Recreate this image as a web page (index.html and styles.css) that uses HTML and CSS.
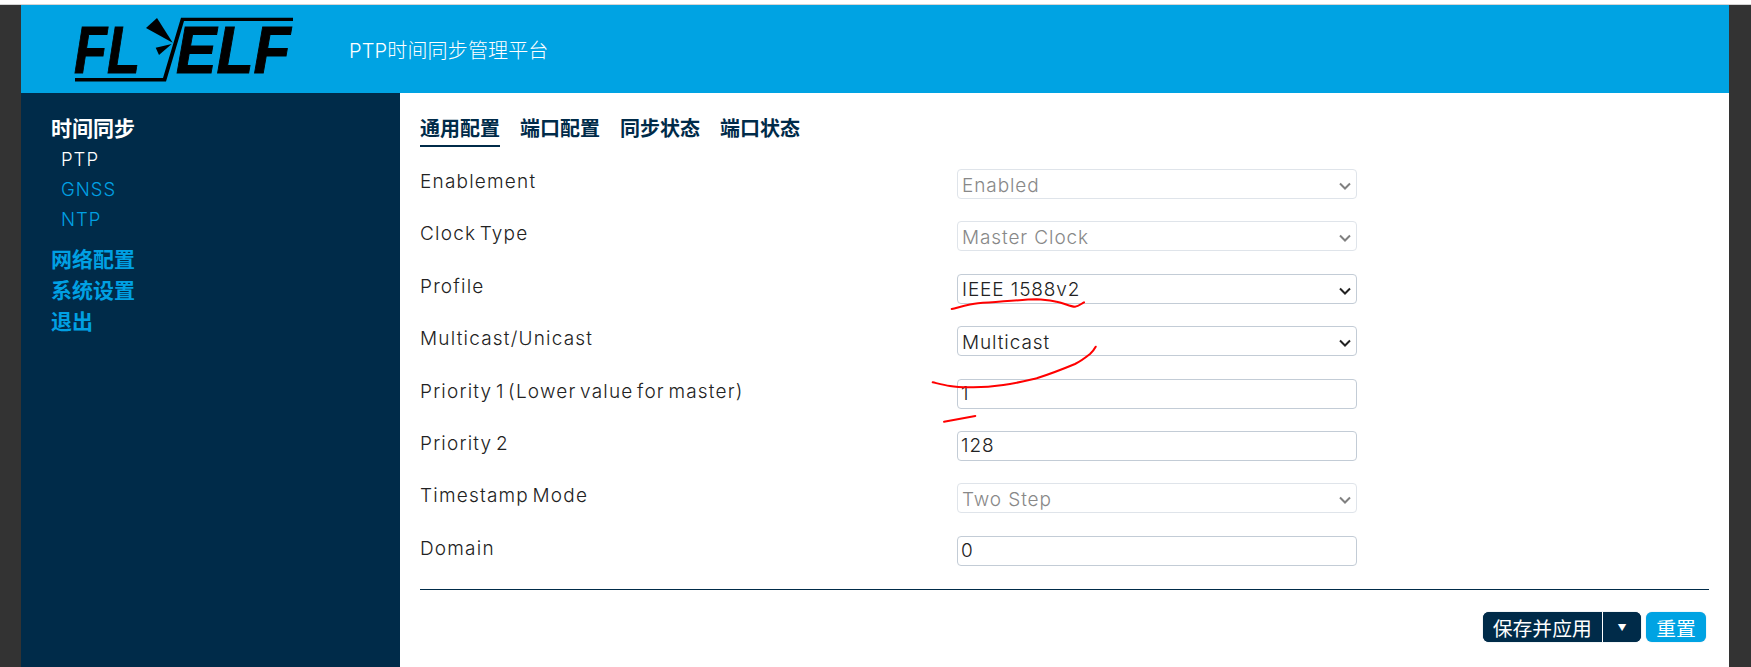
FILE: index.html
```html
<!DOCTYPE html>
<html lang="zh-CN">
<head>
<meta charset="utf-8">
<title>PTP时间同步管理平台</title>
<link rel="stylesheet" href="styles.css">
</head>
<body>
<div class="topline"></div>
<div class="frame">
  <header class="header">
    <svg class="logo" width="226" height="66" viewBox="0 0 226 66" role="img" aria-label="FLYELF">
      <path class="logo-ink" d="M4 61H92L110 .7H222V4H113L95 64.500H4Z"/>
      <path class="logo-ink" d="M75 11L86 1L101.700 25.700Z"/>
      <path class="logo-ink" d="M84.700 30.700L100.700 27L88 38Z"/>
      <text class="logo-text" transform="translate(3 56) scale(.82 1)">FL</text>
      <text class="logo-text" transform="translate(105 56) scale(.92 1)">ELF</text>
    </svg>
    <div class="title">PTP时间同步管理平台</div>
  </header>
  <div class="body">
    <nav class="sidebar">
      <a class="nav-head active">时间同步</a>
      <a class="nav-sub active">PTP</a>
      <a class="nav-sub">GNSS</a>
      <a class="nav-sub">NTP</a>
      <a class="nav-head gap">网络配置</a>
      <a class="nav-head">系统设置</a>
      <a class="nav-head">退出</a>
    </nav>
    <main class="main">
      <div class="tabs">
        <a class="tab selected">通用配置</a>
        <a class="tab">端口配置</a>
        <a class="tab">同步状态</a>
        <a class="tab">端口状态</a>
      </div>
      <form class="form">
        <div class="row"><label class="label">Enablement</label><select class="control choice" disabled><option>Enabled</option></select></div>
        <div class="row"><label class="label">Clock Type</label><select class="control choice" disabled><option>Master Clock</option></select></div>
        <div class="row"><label class="label">Profile</label><select class="control choice"><option>IEEE 1588v2</option></select></div>
        <div class="row"><label class="label">Multicast/Unicast</label><select class="control choice"><option>Multicast</option></select></div>
        <div class="row"><label class="label">Priority 1 (Lower value for master)</label><input class="control text" value="1"></div>
        <div class="row"><label class="label">Priority 2</label><input class="control text" value="128"></div>
        <div class="row"><label class="label">Timestamp Mode</label><select class="control choice" disabled><option>Two Step</option></select></div>
        <div class="row"><label class="label">Domain</label><input class="control text" value="0"></div>
      </form>
      <div class="actions">
        <div class="split">
          <button class="split-main" type="button">保存并应用</button>
          <button class="split-caret" type="button">▼</button>
        </div>
        <button class="reset" type="button">重置</button>
      </div>
    </main>
  </div>
</div>
<svg class="ink" width="1751" height="667" viewBox="0 0 1751 667" aria-hidden="true">
  <path d="M951.700 309C960 307 970 304 978 303.300C1000 302 1020 299.500 1036.700 299.300C1045 299.500 1050 300.500 1056.700 301.700C1064 303 1070 306.500 1075 306.700C1078 306.500 1081 304 1084 302.300"/>
  <path d="M1095.700 346.700C1094 350 1092 352 1090 354C1085 358 1081 361 1075 364C1063 369 1050 374 1036.700 378.300C1025 381 1015 383.500 1003.300 385C990 387 980 387.500 970 387.300C962 387.200 956 387 950 386C944 385 938 383.500 932.700 382.300"/>
  <path d="M944 421.700L975.300 416"/>
</svg>
</body>
</html>
```
FILE: styles.css
```css
* { box-sizing: border-box; }
html, body { margin: 0; height: 100%; overflow: hidden; }
body {
  background: #fff;
  color: #222;
  font-family: Inter, "Noto Sans CJK SC", sans-serif;
  font-weight: 300;
}
.topline { height: 5px; background: #fff; border-bottom: 1px solid #d4d4d4; }
.frame {
  height: 662px;
  background: #fff;
  border-left: 21px solid #333;
  border-right: 22px solid #333;
  display: flex;
  flex-direction: column;
}
.header {
  height: 88px;
  background: #00a3e3;
  display: flex;
  align-items: flex-start;
  flex: none;
}
.logo { margin: 12px 0 0 50px; flex: none; overflow: visible; }
.logo-ink { fill: #000; }
.logo-text {
  font-family: "Liberation Sans", sans-serif;
  font-weight: 700;
  font-style: italic;
  font-size: 66px;
  fill: #000;
  stroke: #000;
  stroke-width: 1;
}
.title {
  margin: 32px 0 0 52px;
  color: #fff;
  font-size: 20px;
  line-height: 28px;
  letter-spacing: .15px;
}
.body { flex: 1; display: flex; min-height: 0; }
.sidebar {
  width: 379px;
  flex: none;
  background: #002b49;
  padding: 20px 0 0 30px;
  display: flex;
  flex-direction: column;
  align-items: flex-start;
}
.nav-head {
  font-size: 21px;
  font-weight: 700;
  line-height: 31px;
  color: #00a0e3;
}
.nav-head.active { color: #fff; }
.nav-head.gap { margin-top: 10px; }
.nav-sub {
  font-size: 18.500px;
  line-height: 30px;
  margin-left: 10px;
  letter-spacing: 1px;
  color: #00a0e3;
}
.nav-sub.active { color: #fff; }
.main { flex: 1; padding: 0 20px; min-width: 0; }
.tabs { display: flex; gap: 20px; padding-top: 22px; }
.tab {
  font-size: 20px;
  font-weight: 700;
  line-height: 28px;
  height: 32px;
  color: #002b49;
}
.tab.selected { border-bottom: 2px solid #002b49; }
.form {
  margin-top: 22px;
  padding-bottom: 8px;
  border-bottom: 1px solid #002b49;
  height: 421px;
}
.row {
  display: flex;
  height: 30px;
  margin-bottom: 22.400px;
}
.label {
  width: 537px;
  flex: none;
  font-size: 19px;
  line-height: 26px;
  letter-spacing: 1.200px;
  word-spacing: -3px;
  color: #222;
}
.control {
  width: 400px;
  height: 30px;
  flex: none;
  border: 1px solid #c3ccd6;
  border-radius: 4px;
  background-color: #fff;
  color: #222;
  font: 300 19px Inter, "Noto Sans CJK SC", sans-serif;
  letter-spacing: .9px;
  outline: none;
}
.choice {
  appearance: none;
  padding: 2px 24px 0 4px;
  background-repeat: no-repeat;
  background-position: right 5px top 12px;
  background-size: 12px 8px;
  background-image: url("data:image/svg+xml,%3Csvg xmlns='http://www.w3.org/2000/svg' viewBox='0 0 12 8'%3E%3Cpath d='M1 1.500L6 6.500L11 1.500' fill='none' stroke='%23222' stroke-width='2'/%3E%3C/svg%3E");
}
.choice:disabled {
  border-color: #dfe4ea;
  color: #888;
  opacity: 1;
  background-image: url("data:image/svg+xml,%3Csvg xmlns='http://www.w3.org/2000/svg' viewBox='0 0 12 8'%3E%3Cpath d='M1 1.500L6 6.500L11 1.500' fill='none' stroke='%23808080' stroke-width='2'/%3E%3C/svg%3E");
}
.control.text { padding: 0 3px; }
.actions {
  display: flex;
  justify-content: flex-end;
  gap: 5px;
  margin-top: 22px;
  padding-right: 3px;
}
.split {
  display: flex;
  height: 30px;
  width: 158.500px;
  border-radius: 6px;
  overflow: hidden;
  background: #002b49;
  box-shadow: 0 0 1px #7f95a6;
}
.split-main, .split-caret, .reset {
  border: 0;
  color: #fff;
  padding: 0;
  font: 400 19.800px Inter, "Noto Sans CJK SC", sans-serif;
  height: 30px;
}
.split-main { width: 120.500px; background: #002b49; border-right: 1px solid #fff; }
.split-caret { width: 38px; background: #002b49; font-size: 9px; }
.reset {
  width: 60px;
  background: #00a3e3;
  border-radius: 6px;
  box-shadow: 0 0 1px #7fb5d0;
}
.ink {
  position: absolute;
  left: 0;
  top: 0;
  pointer-events: none;
}
.ink path { fill: none; stroke: #f00; stroke-width: 2; stroke-linecap: round; }
```
